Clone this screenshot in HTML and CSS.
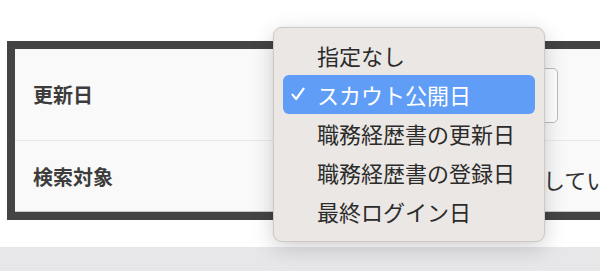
FILE: index.html
```html
<!DOCTYPE html>
<html lang="ja">
<head>
<meta charset="utf-8">
<link rel="stylesheet" href="styles.css">
</head>
<body>
<div class="page">
  <div class="frame">
    <div class="row row-date">
      <div class="label">更新日</div>
      <div class="value"><div class="select"></div></div>
    </div>
    <div class="row row-target">
      <div class="label">検索対象</div>
      <div class="value"><span class="value-text">してい</span></div>
    </div>
  </div>
  <div class="band"></div>
  <ul class="menu">
    <li class="item">指定なし</li>
    <li class="item selected"><svg class="check" viewBox="0 0 14 14" width="14" height="14"><path d="M1.5 7.6 L5.2 12 L12.6 1.6" fill="none" stroke="#fff" stroke-width="2.2" stroke-linecap="round" stroke-linejoin="round"/></svg>スカウト公開日</li>
    <li class="item">職務経歴書の更新日</li>
    <li class="item">職務経歴書の登録日</li>
    <li class="item">最終ログイン日</li>
  </ul>
</div>
</body>
</html>
```

FILE: styles.css
```css
* { box-sizing: border-box; }
html, body { margin: 0; padding: 0; }
body {
  width: 600px;
  height: 271px;
  overflow: hidden;
  background: #ffffff;
  font-family: "Noto Sans CJK JP", "Noto Sans", sans-serif;
  color: #333;
}
.page {
  position: relative;
  width: 600px;
  height: 271px;
  padding-top: 41px;
  overflow: hidden;
}
.frame {
  margin-left: 7px;
  width: 700px;
  border: 8px solid #444444;
  border-right: none;
  background: #f9f9f9;
}
.row {
  display: grid;
  grid-template-columns: 275px 1fr;
  align-items: center;
}
.row-date {
  height: 92px;
  border-bottom: 1px solid #e9e9e9;
}
.row-target {
  height: 71px;
  border-bottom: 1px solid #c9c9c9;
}
.label {
  padding-left: 18px;
  font-size: 20px;
  font-weight: 700;
  color: #3c3c3c;
  line-height: 1;
}
.row-target .label { padding-top: 2px; }
.select {
  width: 268px;
  height: 55px;
  margin-top: 2px;
  border: 1px solid #bdbdbd;
  border-radius: 5px;
  background: #fff;
}
.value-text {
  display: block;
  padding-left: 253px;
  padding-top: 6px;
  font-size: 22px;
  line-height: 1;
  color: #333;
  white-space: nowrap;
}
.band {
  margin-top: 27px;
  height: 24px;
  background: #e7e7e9;
}
.menu {
  position: absolute;
  left: 273px;
  top: 27px;
  width: 272px;
  height: 215px;
  margin: 0;
  padding: 8px 9px 9px;
  list-style: none;
  background: #ebe7e4;
  border: 1px solid #cfcac6;
  border-radius: 9px;
  box-shadow: 0 6px 22px rgba(0, 0, 0, 0.18), 0 0 2px rgba(0, 0, 0, 0.08);
}
.item {
  display: flex;
  align-items: center;
  height: 39px;
  padding-left: 34px;
  padding-bottom: 2px;
  font-size: 22px;
  line-height: 1;
  color: #2b2b2b;
  white-space: nowrap;
  border-radius: 6px;
}
.item.selected {
  position: relative;
  background: #5f9df7;
  color: #ffffff;
}
.check {
  position: absolute;
  left: 8px;
  top: 12px;
}
```
